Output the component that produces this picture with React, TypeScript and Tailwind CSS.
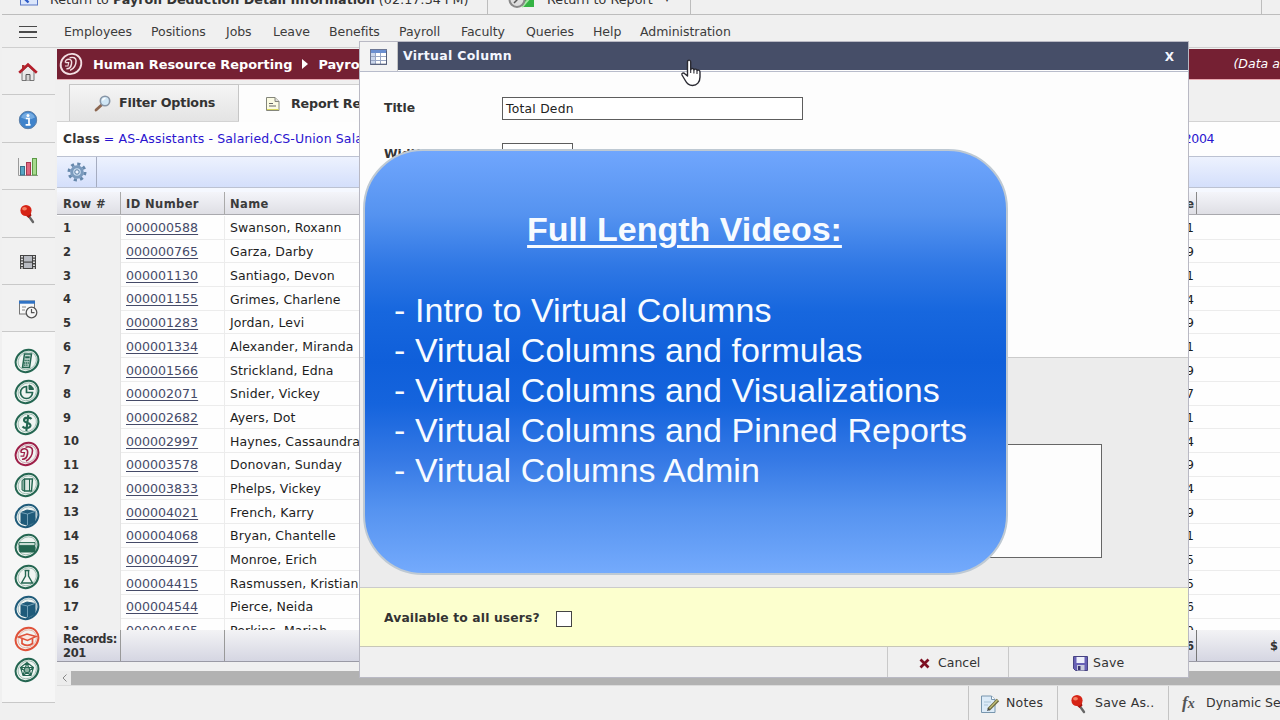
import type { ReactNode } from "react"

const menuItems = [
    { name: "Employees", width: "w-[87px]" },
    { name: "Positions", width: "w-[75px]" },
    { name: "Jobs", width: "w-[47px]" },
    { name: "Leave", width: "w-[56px]" },
    { name: "Benefits", width: "w-[70px]" },
    { name: "Payroll", width: "w-[62px]" },
    { name: "Faculty", width: "w-[65px]" },
    { name: "Queries", width: "w-[67px]" },
    { name: "Help", width: "w-[47px]" },
    { name: "Administration", width: "w-[100px]" },
]

const rows = [
    { id: "000000588", name: "Swanson, Roxann", end: "1" },
    { id: "000000765", name: "Garza, Darby", end: "9" },
    { id: "000001130", name: "Santiago, Devon", end: "1" },
    { id: "000001155", name: "Grimes, Charlene", end: "4" },
    { id: "000001283", name: "Jordan, Levi", end: "9" },
    { id: "000001334", name: "Alexander, Miranda", end: "1" },
    { id: "000001566", name: "Strickland, Edna", end: "9" },
    { id: "000002071", name: "Snider, Vickey", end: "7" },
    { id: "000002682", name: "Ayers, Dot", end: "1" },
    { id: "000002997", name: "Haynes, Cassaundra", end: "4" },
    { id: "000003578", name: "Donovan, Sunday", end: "9" },
    { id: "000003833", name: "Phelps, Vickey", end: "4" },
    { id: "000004021", name: "French, Karry", end: "9" },
    { id: "000004068", name: "Bryan, Chantelle", end: "1" },
    { id: "000004097", name: "Monroe, Erich", end: "5" },
    { id: "000004415", name: "Rasmussen, Kristian", end: "5" },
    { id: "000004544", name: "Pierce, Neida", end: "6" },
    { id: "000004595", name: "Perkins, Mariah", end: "9" },
]

const videos = [
    "- Intro to Virtual Columns",
    "- Virtual Columns and formulas",
    "- Virtual Columns and Visualizations",
    "- Virtual Columns and Pinned Reports",
    "- Virtual Columns Admin",
]

function HomeIcon() {
    return (
        <svg width="20" height="20" viewBox="0 0 20 20">
            <path d="M4 9.5V18.5H16V9.5L10 4z" fill="#e9e9e9" stroke="#777" />
            <path d="M8 18.5v-6h4v6" fill="#d5d5d5" stroke="#555" />
            <path d="M4 3h2.500v3.500L4 8z" fill="#a33" />
            <path d="M1.200 10.800L10 2.500l8.800 8.300" fill="none" stroke="#b51f2b" strokeWidth="2.600" />
        </svg>
    )
}

function InfoIcon() {
    return (
        <svg width="20" height="20" viewBox="0 0 20 20">
            <circle cx="10" cy="10" r="8.700" fill="#3f83cb" stroke="#5b7fa8" />
            <path d="M3 7.500a7.500 7.500 0 0 1 14 0q-7 4-14 0z" fill="#74abe2" />
            <circle cx="10" cy="5.400" r="1.500" fill="#fff" />
            <path d="M7.800 8.500H11v6h1.300M7.600 14.800h5" stroke="#fff" strokeWidth="1.700" fill="none" />
        </svg>
    )
}

function ChartIcon() {
    return (
        <svg width="22" height="20" viewBox="0 0 22 20">
            <path d="M1.500 1v17.500H21" fill="none" stroke="#9a9a9a" />
            <rect x="3.500" y="9.500" width="4" height="8.500" fill="#58a5c4" stroke="#37718c" />
            <rect x="9.500" y="5.500" width="4" height="12.500" fill="#e0667d" stroke="#a83850" />
            <rect x="15.500" y="1.500" width="4" height="16.500" fill="#a6da8e" stroke="#5c9a46" />
        </svg>
    )
}

function PinIcon() {
    return (
        <svg width="18" height="20" viewBox="0 0 18 20">
            <path d="M9 11l5 7" stroke="#666" strokeWidth="2.400" strokeLinecap="round" />
            <path d="M5 10l6-3 1.500 4.500L9.500 14z" fill="#a5150f" />
            <circle cx="7" cy="6.500" r="5.600" fill="#d62416" />
            <ellipse cx="5.500" cy="4.700" rx="2.400" ry="1.800" fill="#f58063" />
        </svg>
    )
}

function FilmIcon() {
    return (
        <svg width="18" height="16" viewBox="0 0 18 16">
            <rect x="1" y="1" width="16" height="14" fill="#444" />
            <rect x="5" y="2" width="8" height="5.500" fill="#b8bbc2" />
            <rect x="5" y="8.700" width="8" height="5.300" fill="#b8bbc2" />
            <path d="M3 2v13M15 2v13" stroke="#ddd" strokeWidth="2" strokeDasharray="1.500 1.300" />
        </svg>
    )
}

function ScheduleIcon() {
    return (
        <svg width="20" height="20" viewBox="0 0 20 20">
            <rect x="1.500" y="2" width="15" height="13" fill="#f8f8f8" stroke="#777" />
            <path d="M1 3.200h16" stroke="#2f72c4" strokeWidth="3" />
            <path d="M4 8h4M4 11h3" stroke="#888" />
            <circle cx="13.500" cy="13.500" r="5.300" fill="#f7f7f7" stroke="#555" strokeWidth="1.300" />
            <path d="M13.500 10v3.700h3" fill="none" stroke="#555" strokeWidth="1.200" />
        </svg>
    )
}

function GearIcon() {
    return (
        <svg width="20" height="20" viewBox="0 0 20 20">
            <circle cx="10" cy="10" r="8" fill="none" stroke="#6688ac" strokeWidth="3" strokeDasharray="3.100 3.180" />
            <circle cx="10" cy="10" r="5.300" fill="#c8dbee" stroke="#7a9abd" strokeWidth="3" />
            <circle cx="10" cy="10" r="2.200" fill="#eef4ff" stroke="#587da4" />
        </svg>
    )
}

function TableIcon() {
    return (
        <svg width="17" height="16" viewBox="0 0 17 16">
            <rect x="0.500" y="0.500" width="16" height="15" fill="#fff" stroke="#6d7794" />
            <rect x="1" y="1" width="15" height="3" fill="#6b8fd0" />
            <rect x="1" y="4" width="4" height="11" fill="#cbd7ec" />
            <path d="M5.500 4v11M10.500 4v11M1 7.500h15M1 11.500h15" stroke="#98a6c4" />
            <path d="M1 15.200h15.500V2" fill="none" stroke="#555f78" />
        </svg>
    )
}

function SearchIcon() {
    return (
        <svg width="18" height="17" viewBox="0 0 18 17">
            <path d="M2 15l5.500-5" stroke="#8d6750" strokeWidth="2.800" strokeLinecap="round" />
            <circle cx="11" cy="6" r="4.700" fill="#cfe6f5" stroke="#8795a6" strokeWidth="1.600" />
            <path d="M8.500 5.500a2.600 2.600 0 0 1 3-2" stroke="#fff" strokeWidth="1.400" fill="none" />
        </svg>
    )
}

function PageIcon() {
    return (
        <svg width="15" height="16" viewBox="0 0 15 16">
            <path d="M1.500 1.500h8.500l4 4V14.500H1.500z" fill="#fbfbe4" stroke="#84867a" />
            <path d="M10 1.500v4h4" fill="#ddd" stroke="#84867a" />
            <path d="M4 7.500h4M4 10h7" stroke="#666" />
            <path d="M2 13.500h11.500" stroke="#d7d65c" />
        </svg>
    )
}

function NotesIcon() {
    return (
        <svg width="20" height="20" viewBox="0 0 20 20">
            <path d="M1.500 2h10l3.500 3.500V18.500H1.500z" fill="#dcebf8" stroke="#7896ae" />
            <path d="M11.500 2v3.500H15" fill="#fff" stroke="#7896ae" />
            <path d="M4 8h7M4 11h4" stroke="#a9c3d6" />
            <path d="M8.500 15.500L18 6" stroke="#6d6b42" strokeWidth="3.400" />
            <path d="M9.500 14.300L17.500 6" stroke="#c7c47a" strokeWidth="1.200" />
            <path d="M7 17l1-3 2 2z" fill="#444" />
        </svg>
    )
}

function SaveIcon() {
    return (
        <svg width="15" height="15" viewBox="0 0 15 15">
            <path d="M0.500 0.500h14v14H2.500l-2-2z" fill="#6861b5" stroke="#474382" />
            <rect x="3.500" y="1" width="8" height="6" fill="#eef0fb" />
            <rect x="4" y="9" width="7.500" height="5.500" fill="#c9cbdc" />
            <rect x="5" y="10" width="2.500" height="4" fill="#39346f" />
        </svg>
    )
}

function HandCursor() {
    return (
        <svg width="24" height="28" viewBox="0 0 24 28">
            <path
                d="M8.500 17V3c0-2.500 3.200-2.500 3.200 0v7.500c.3-1.500 3-1.400 3.200.4.500-1.200 2.900-1 3.100.6.700-.9 3-.5 3 1.500V18c0 5-3 8.500-7.500 8.500-4 0-6-2.500-7.500-5.500l-3-5c-.7-1.600 1.500-2.700 2.800-1.300z"
                fill="#fff"
                stroke="#2b2b33"
                strokeWidth="1.400"
                strokeLinejoin="round"
            />
            <path d="M11.700 10v4M14.900 11v3.500M18 12v3" stroke="#2b2b33" strokeWidth="1.100" />
        </svg>
    )
}

function Emblem({ color, children }: { color: string; children: ReactNode }) {
    return (
        <svg width="26" height="26" viewBox="0 0 26 26" fill="none" stroke={color}>
            <ellipse cx="13" cy="13" rx="12" ry="10.500" transform="rotate(-40 13 13)" fill="#f0f5f2" strokeWidth="2" />
            <ellipse cx="13.300" cy="13" rx="9.700" ry="8.400" transform="rotate(-40 13 13)" strokeWidth="0.600" opacity="0.600" />
            {children}
        </svg>
    )
}

const swirl = (
    <>
        <path d="M7 11.500c-.5-2.500 1.500-4 4-3.700 2.500.3 3 2.500 2.500 5.200-.5 3-2.500 5.500-5.500 5.200" strokeWidth="1.600" />
        <path d="M11.500 6.200c4-1 7 0 7 3.300 0 4-2.500 8.500-6.500 10.500" strokeWidth="1.600" />
        <path d="M7 11.500h3.500l-.8 3.700H6.500" strokeWidth="1.200" />
    </>
)

const box = (color: string) => (
    <>
        <path d="M7 9.500l6-2.500 8 1.500V19l-7 3.500L7 20z" fill={color} />
        <path d="M13.500 11v11M7 9.500l6.500 1.500L21 8.500" stroke="#88b2c6" strokeWidth="0.800" />
    </>
)

const green = "#246651"
const blue = "#1f5b7a"

function Sidebar() {
    const tools = [<HomeIcon />, <InfoIcon />, <ChartIcon />, <PinIcon />, <FilmIcon />, <ScheduleIcon />]

    return (
        <aside className="flex w-[53px] shrink-0 flex-col bg-[#f6f6f6]">
            {tools.map((icon, i) => (
                <div key={i} className="flex h-[47.400px] shrink-0 items-center justify-center border-b border-[#c9c9c9] bg-[#f1f1f1] pt-[2px] pr-[2px]">
                    {icon}
                </div>
            ))}
            <div className="flex h-[371px] shrink-0 flex-col items-center border-b border-[#c8c8c8] pt-[16px] pr-[3px]">
                <div className="flex flex-col gap-[4.850px]">
                    <Emblem color={green}>
                        <path d="M10.500 6h7l-2 13.500h-7z" fill="#c4d8d0" strokeWidth="1.500" />
                        <path d="M11.200 9.300h4.500" strokeWidth="2" />
                        <path d="M10.500 12.500h5M10 15h5M9.800 17.200h4.500" strokeWidth="1.300" strokeDasharray="1.300 0.500" />
                    </Emblem>
                    <Emblem color={green}>
                        <path d="M12.500 7.500a6 6 0 1 0 6 6h-6z" strokeWidth="1.700" />
                        <path d="M15 6v4.500h4.500C19 8 17.500 6.500 15 6z" fill={green} />
                    </Emblem>
                    <Emblem color={green}>
                        <path d="M17.500 9c-1.500-2-7.500-2-7.500 1.200 0 3 7 2 6.500 5.500-.5 3-6 3-8 .8M14.300 5l-2 16" strokeWidth="2.100" />
                    </Emblem>
                    <Emblem color="#9e1f48">{swirl}</Emblem>
                    <Emblem color={green}>
                        <path d="M8 8.500L10.500 7v12L8 18z" fill="#9dbcb0" />
                        <path d="M10.500 7h8l-1 12h-7z" fill="#dde8e3" strokeWidth="1.400" />
                        <path d="M15.500 7v12" />
                    </Emblem>
                    <Emblem color={blue}>{box(blue)}</Emblem>
                    <Emblem color={green}>
                        <path d="M5 9.500h16v3H5z" fill="#c9dcd4" strokeWidth="0.900" />
                        <path d="M5 13.500h16V19H6z" fill={green} />
                    </Emblem>
                    <Emblem color={green}>
                        <path d="M10.500 6.500h5M11.500 6.500V12L7.500 19h11l-4-7V6.500" strokeWidth="1.400" />
                    </Emblem>
                    <Emblem color={blue}>{box(blue)}</Emblem>
                    <Emblem color="#e0523a">
                        <path d="M4.500 11L13 8l9 2.500-8.500 4z" fill="#fbe6df" strokeWidth="1.500" />
                        <path d="M8 13v4.500c3 2.500 7.500 2.500 10.500 0v-5" strokeWidth="1.700" />
                    </Emblem>
                    <Emblem color={green}>
                        <path d="M13 5.500l6.500 5-2.500 8H9l-2.500-8zM13 5.500L9 18.500M13 5.500l4 13M6.500 10.500l10.500 8M19.500 10.500L9 18.500M6.500 10.500h13" strokeWidth="1.100" />
                        <circle cx="13" cy="13" r="2.800" fill="#8db3a4" strokeWidth="1" />
                    </Emblem>
                </div>
            </div>
            <div className="flex-1 bg-[#f0f0f0]" />
        </aside>
    )
}

function TopStrip() {
    return (
        <div className="flex h-[15px] shrink-0 items-end overflow-hidden border-b border-[#bdbdbd]">
            <div className="flex h-[29px] w-[486px] shrink-0 items-center border-r border-[#bdbdbd] pl-[18px]">
                <svg width="18" height="17" viewBox="0 0 18 17" className="mt-[-4px]">
                    <rect x="0.500" y="0.500" width="17" height="15.500" fill="#dbe6fb" stroke="#5b79c6" />
                    <path d="M14.500 9.500H5M8.500 5.500l-4 4 4 4" fill="none" stroke="#2d5bc8" strokeWidth="2.400" />
                </svg>
                <span className="ml-3 text-[12.700px] whitespace-nowrap">
                    Return to <b>Payroll Deduction Detail Information</b> (02:17:34 PM)
                </span>
            </div>
            <div className="flex h-[29px] w-[203px] shrink-0 items-center border-r border-[#bdbdbd] pl-[20px]">
                <svg width="28" height="18" viewBox="0 0 28 18">
                    <rect x="14" y="0" width="12" height="16" fill="#35b344" />
                    <path d="M14 16L26 2" stroke="#a6e6a5" strokeWidth="2" />
                    <circle cx="9" cy="8.500" r="7.500" fill="#ddd" stroke="#888" strokeWidth="2" />
                    <path d="M9 4v5l-3 3" fill="none" stroke="#555" strokeWidth="1.500" />
                </svg>
                <span className="ml-[11px] text-[12.700px] tracking-[0.050px]">Return to Report</span>
                <span className="ml-3 text-[9px]">▾</span>
            </div>
            <div className="h-full w-[571px] shrink-0 border-r border-[#bdbdbd]" />
        </div>
    )
}

function MenuBar() {
    return (
        <nav className="flex h-[33px] shrink-0 items-center border-b border-[#cfcfcf] pt-[2px] text-[12.500px] tracking-[-0.050px] text-[#3c3c3c]">
            <div className="flex w-[62px] shrink-0 flex-col gap-[4px] pl-[17px]">
                <div className="h-[1.500px] w-[18px] bg-[#4a4a4a]" />
                <div className="h-[1.500px] w-[18px] bg-[#4a4a4a]" />
                <div className="h-[1.500px] w-[18px] bg-[#4a4a4a]" />
            </div>
            {menuItems.map((item) => (
                <div key={item.name} className={`shrink-0 whitespace-nowrap ${item.width}`}>
                    {item.name}
                </div>
            ))}
        </nav>
    )
}

function Grid() {
    return (
        <div className="flex h-[474px] shrink-0 flex-col overflow-hidden bg-[#f5f8ff] pt-[4px] text-[12.500px]">
            <div className="flex h-[23px] shrink-0 items-center border-b border-[#a9a9ae] bg-linear-to-b from-[#f4f5fa] to-[#dfdfe5] text-[11.500px] font-bold tracking-[0.400px] text-[#3b3b3b]">
                <div className="flex h-full w-[64px] items-center border-r border-[#aaa] pt-[3px] pl-[6px]">Row #</div>
                <div className="flex h-full w-[104px] items-center border-r border-[#aaa] pt-[3px] pl-[5px]">ID Number</div>
                <div className="flex h-full w-[972px] items-center justify-between border-r border-[#888] pt-[3px] pr-[2px] pl-[5px]">
                    <span>Name</span>
                    <span className="tracking-normal">e</span>
                </div>
            </div>
            <div className="flex h-[415px] shrink-0 flex-col overflow-hidden bg-[#fefefe] pt-px">
                {rows.map((row, i) => (
                    <div key={row.id} className="flex h-[23.690px] shrink-0 items-center">
                        <div className="flex h-full w-[64px] items-center border-r border-[#e2e2e2] bg-[#f0f0f0] pt-[2px] pl-[6px] text-[11.500px] font-bold text-[#333]">
                            {i + 1}
                        </div>
                        <div className="flex h-full w-[104px] items-center border-r border-b border-[#ececec] pt-[3px] pl-[5px] text-[12.600px] text-[#454a68]">
                            <span className="underline underline-offset-2">{row.id}</span>
                        </div>
                        <div className="flex h-full w-[972px] items-center justify-between border-b border-[#ececec] pt-[3px] pr-[3px] pl-[5px] text-[#1d1d1d]">
                            <span className="tracking-[0.100px]">{row.name}</span>
                            <span>{row.end}</span>
                        </div>
                        <div className="h-full flex-1 border-b border-[#ececec]" />
                    </div>
                ))}
            </div>
            <div className="flex h-[32px] shrink-0 items-center border-b border-[#9a9aa5] bg-linear-to-b from-[#f3f3f5] to-[#d5d6e2] text-[11.500px] leading-[14px] font-bold text-[#333]">
                <div className="flex h-full w-[64px] items-center border-r border-[#999] pt-px pl-[6px] tracking-[-0.350px]">Records: 201</div>
                <div className="h-full w-[104px] border-r border-[#999]" />
                <div className="flex h-full w-[972px] items-center justify-end border-r border-[#777] pr-[2px]">6</div>
                <div className="pl-[73px]">$</div>
            </div>
        </div>
    )
}

function BottomBar() {
    return (
        <div className="flex min-h-0 flex-1 justify-end border-t border-[#dcdcdc] text-[12.500px] text-[#333]">
            <div className="flex w-[89px] items-center gap-[6px] border-l border-[#c4c4c4] pt-px pl-[11px]">
                <NotesIcon />
                <span className="tracking-[0.200px]">Notes</span>
            </div>
            <div className="flex w-[111px] items-center gap-[7px] border-l border-[#c4c4c4] pt-px pl-[12px]">
                <PinIcon />
                <span className="tracking-[0.200px]">Save As..</span>
            </div>
            <div className="flex w-[112px] items-center overflow-hidden border-l border-[#c4c4c4] pt-px pl-[13px] whitespace-nowrap">
                <span className="w-[24px] shrink-0 font-['Liberation_Serif',serif] text-[17px] leading-[18px] font-bold text-[#555] italic">
                    f<span className="text-[14px]">x</span>
                </span>
                Dynamic Selection
            </div>
        </div>
    )
}

function Main() {
    return (
        <main className="ml-[2px] flex min-w-0 flex-1 flex-col">
            <div className="mt-px flex h-[31px] shrink-0 items-center overflow-hidden border-b border-[#e9a9b2] bg-[#752033] text-white">
                <svg width="24" height="24" viewBox="0 0 26 26" fill="none" stroke="#f3dfe3" className="ml-[2px] shrink-0">
                    <ellipse cx="13" cy="13" rx="11.600" ry="10.600" transform="rotate(-40 13 13)" strokeWidth="2" />
                    {swirl}
                </svg>
                <span className="ml-[10px] shrink-0 pt-px text-[12.900px] font-bold whitespace-nowrap">Human Resource Reporting</span>
                <svg width="6" height="10" viewBox="0 0 6 10" className="mx-[10px] shrink-0">
                    <path d="M0 0l6 5-6 5z" fill="#fff" />
                </svg>
                <span className="w-[857px] shrink-0 pt-px text-[12.900px] font-bold whitespace-nowrap">Payroll Deductions</span>
                <span className="shrink-0 pt-px pl-[58px] text-[12.500px] whitespace-nowrap italic">(Data as of today)</span>
            </div>
            <div className="flex h-[42px] shrink-0 border-b border-[#d3d3d3] bg-[#f0f0f0] pt-[4px] pl-[12px] text-[12.700px] font-bold text-[#333]">
                <div className="flex w-[170px] items-center border border-b-0 border-[#c6c6c6] bg-linear-to-b from-[#f5f5f5] to-[#e4e4e4] pl-[24px]">
                    <SearchIcon />
                    <span className="ml-[7px] tracking-[-0.150px] whitespace-nowrap">Filter Options</span>
                </div>
                <div className="mb-[-1px] flex w-[170px] items-center border-t border-[#d0d0d0] bg-[#fdfdfd] pl-[26px]">
                    <PageIcon />
                    <span className="ml-[11px] tracking-[-0.150px] whitespace-nowrap">Report Results</span>
                </div>
            </div>
            <div className="flex h-[34px] shrink-0 items-center justify-between bg-[#fefefe] pt-px pr-[66px] pl-[6px] text-[12.500px] text-[#2a14cf]">
                <span className="whitespace-nowrap">
                    <b className="text-[12.200px] tracking-[0.200px] text-[#333]">Class</b> <span className="tracking-[0.130px]">= AS-Assistants - Salaried,CS-Union Salaried</span>
                </span>
                <span className="tracking-[-0.400px]">2004</span>
            </div>
            <div className="flex h-[32px] shrink-0 border-y border-[#bcc2d2] bg-linear-to-b from-[#edf2fe] to-[#d4dffb]">
                <div className="flex w-[40px] items-center justify-center border-r border-[#a5acc0]">
                    <GearIcon />
                </div>
            </div>
            <Grid />
            <div className="mt-[9px] flex h-[14px] shrink-0 items-center bg-[#b2b2b2]">
                <div className="flex h-full w-[14px] items-center justify-center bg-[#ececec]">
                    <svg width="5" height="8" viewBox="0 0 5 8">
                        <path d="M4.500 0.500L1 4l3.500 3.500" fill="none" stroke="#888" />
                    </svg>
                </div>
            </div>
            <BottomBar />
        </main>
    )
}

function ColumnDialog() {
    return (
        <section className="absolute top-[41px] left-[359px] flex h-[637px] w-[830px] flex-col border border-[#b9b9c4] bg-[#fdfdfd] text-[12.500px] text-[#333]">
            <header className="flex h-[30px] shrink-0 border-b border-[#b8bccb]">
                <div className="flex w-[38px] items-center justify-center border-r border-[#c3c3c3] bg-[#f3f3f3]">
                    <TableIcon />
                </div>
                <div className="mb-px flex flex-1 items-center justify-between bg-[#464e68] pt-px pr-[14px] pl-[5px] text-[12.500px] font-bold text-[#f4f6ff]">
                    <span className="tracking-[0.300px]">Virtual Column</span>
                    <span className="text-[12px] leading-none">X</span>
                </div>
            </header>
            <div className="flex h-[285px] shrink-0 flex-col pt-[25px] pl-[24px] text-[12.300px] font-bold">
                <div className="flex h-[23px] items-center">
                    <span className="w-[118px]">Title</span>
                    <div className="flex h-full w-[301px] items-center border border-[#5d5d5d] bg-white pt-px pl-[3px] text-[12.300px] font-normal tracking-[0.250px] text-[#222]">
                        Total Dedn
                    </div>
                </div>
                <div className="mt-[23px] flex h-[23px] items-center">
                    <span className="w-[118px]">Width</span>
                    <div className="h-full w-[71px] border border-[#5d5d5d] bg-white" />
                </div>
            </div>
            <div className="h-[231px] shrink-0 border-y border-[#cbcbcb] bg-[#ececec] pt-[86px] pl-[142px]">
                <div className="h-[114px] w-[600px] border border-[#666] bg-[#fdfdfd]" />
            </div>
            <div className="flex h-[59px] shrink-0 items-center border-b border-[#c7c7b7] bg-[#fcffce] pt-[3px] pl-[24px] text-[12.300px] font-bold">
                <span className="w-[172px] tracking-[0.150px] whitespace-nowrap">Available to all users?</span>
                <div className="size-[16px] border border-[#444] bg-white" />
            </div>
            <footer className="flex min-h-0 flex-1 justify-end bg-[#f0f0f0]">
                <div className="flex w-[121px] items-center gap-[8px] border-l border-[#c9c9c9] pt-[2px] pl-[31px]">
                    <svg width="11" height="11" viewBox="0 0 11 11">
                        <path d="M1.500 1.500l8 8M9.500 1.500l-8 8" stroke="#7d1022" strokeWidth="2.700" />
                    </svg>
                    <span>Cancel</span>
                </div>
                <div className="flex w-[180px] items-center gap-[5px] border-l border-[#c9c9c9] pt-[2px] pl-[64px]">
                    <SaveIcon />
                    <span className="tracking-[0.200px]">Save</span>
                </div>
            </footer>
        </section>
    )
}

function VideoCallout() {
    return (
        <div className="absolute top-[149px] left-[363px] h-[426px] w-[645px] rounded-[60px] border-2 border-[#bec9d3] bg-[linear-gradient(#70a6fd,#5593f0_15%,#3078e5_27%,#1767de_38%,#0f5fda_50%,#1564dd_60%,#3579e5_73%,#5593f0_85%,#74aafc)] font-['Liberation_Sans',sans-serif] text-[34px] text-[#f7fbff]">
            <h2 className="mt-[58px] pr-[2px] text-center leading-[40px] font-bold underline decoration-[3px] underline-offset-[4px]">
                Full Length Videos:
            </h2>
            <ul className="mt-[41px] pl-[29px] leading-[40px] tracking-[0.080px] whitespace-nowrap">
                {videos.map((video) => (
                    <li key={video}>{video}</li>
                ))}
            </ul>
        </div>
    )
}

export default function App() {
    return (
        <div className="relative flex h-[720px] w-[1280px] flex-col overflow-hidden bg-[#f0f0f0] pl-[2px] font-['DejaVu_Sans',sans-serif] text-[#333]">
            <TopStrip />
            <MenuBar />
            <div className="flex min-h-0 flex-1">
                <Sidebar />
                <Main />
            </div>
            <ColumnDialog />
            <VideoCallout />
            <div className="absolute top-[59px] left-[679px]">
                <HandCursor />
            </div>
        </div>
    )
}
